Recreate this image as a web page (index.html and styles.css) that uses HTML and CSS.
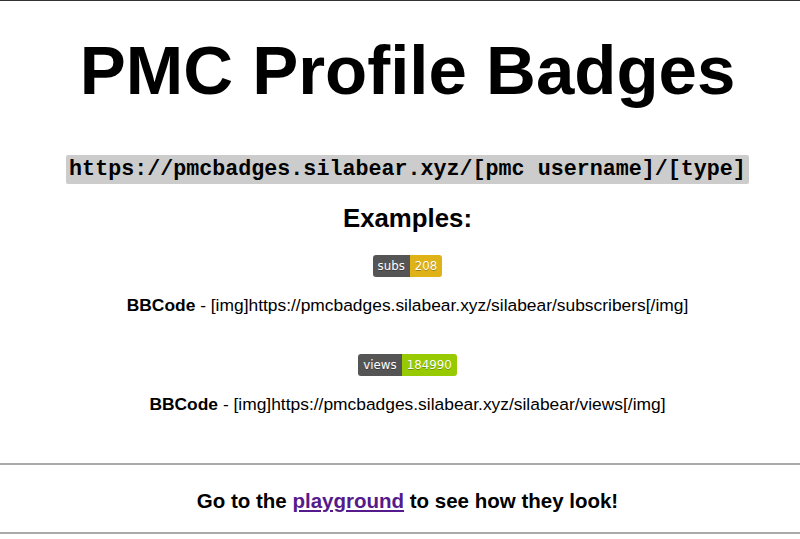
FILE: index.html
```html
<!DOCTYPE html>
<html lang="en">
<head>
    <meta charset="UTF-8">
    <meta name="viewport" content="width=device-width, initial-scale=1.0">
    <title>PMC Profile Badges</title>
    <link rel="stylesheet" href="styles.css">
</head>
<body>
    <header class="page-header">
        <h1>PMC Profile Badges</h1>
    </header>

    <main class="content">
        <code class="url-format">https://pmcbadges.silabear.xyz/[pmc username]/[type]</code>

        <h2>Examples:</h2>

        <!-- subscribers -->
        <div class="example">
            <span class="badge">
                <span class="badge-label">subs</span>
                <span class="badge-value badge-yellow">208</span>
            </span>
            <p><b>BBCode</b> - [img]https://pmcbadges.silabear.xyz/silabear/subscribers[/img]</p>
        </div>

        <!-- views -->
        <div class="example">
            <span class="badge">
                <span class="badge-label">views</span>
                <span class="badge-value badge-green">184990</span>
            </span>
            <p><b>BBCode</b> - [img]https://pmcbadges.silabear.xyz/silabear/views[/img]</p>
        </div>
    </main>

    <footer class="page-footer">
        <h3>Go to the <a href="#playground">playground</a> to see how they look!</h3>
    </footer>
</body>
</html>
```

FILE: styles.css
```css
* {
    margin: 0;
    padding: 0;
    box-sizing: border-box;
}

body {
    font-family: "Liberation Sans", Arial, sans-serif;
    color: #000;
    background: #fff;
    text-align: center;
    border-top: 1px solid #333;
}

/* everything sits a bit right of the middle */
.page-header,
.content,
.page-footer h3 {
    padding-left: 15px;
}

/* title */
.page-header h1 {
    font-size: 69px;
    font-weight: bold;
    line-height: 1.15;
    padding-top: 30px;
}

.content {
    display: flex;
    flex-direction: column;
    align-items: center;
    padding-top: 45px;
}

.url-format {
    font-family: "Liberation Mono", "Courier New", monospace;
    font-weight: bold;
    font-size: 21.7px;
    background-color: #ccc;
    padding: 2px 3px;
    border-radius: 2px;
    line-height: 25px;
}

.content h2 {
    font-size: 25.8px;
    margin-top: 19px;
    line-height: 30px;
}

.example {
    display: flex;
    flex-direction: column;
    align-items: center;
}

.example:first-of-type {
    margin-top: 22px;
}

.example + .example {
    margin-top: 38px;
}

.example p {
    font-size: 17.4px;
    margin-top: 18px;
}

/* shields style badge */
.badge {
    display: inline-flex;
    height: 22px;
    border-radius: 3px;
    overflow: hidden;
    font-family: "DejaVu Sans", Verdana, sans-serif;
    font-size: 11.8px;
    color: #fff;
    text-shadow: 0 1px 0 rgba(1, 1, 1, 0.3);
    background-image: linear-gradient(rgba(255, 255, 255, 0.1), rgba(0, 0, 0, 0.1));
}

.badge span {
    display: flex;
    align-items: center;
    padding: 0 5px;
}

.badge-label {
    background-color: #555;
}

.badge-yellow {
    background-color: #dfb317;
}

.badge-green {
    background-color: #97ca00;
}

.page-footer {
    margin-top: 48px;
    border-top: 2px solid #aaa;
    border-bottom: 2px solid #aaa;
    padding: 22px 0 17px;
}

.page-footer h3 {
    font-size: 20.5px;
    line-height: 28px;
}

.page-footer a {
    color: #551a8b;
    text-decoration: underline;
}
```
